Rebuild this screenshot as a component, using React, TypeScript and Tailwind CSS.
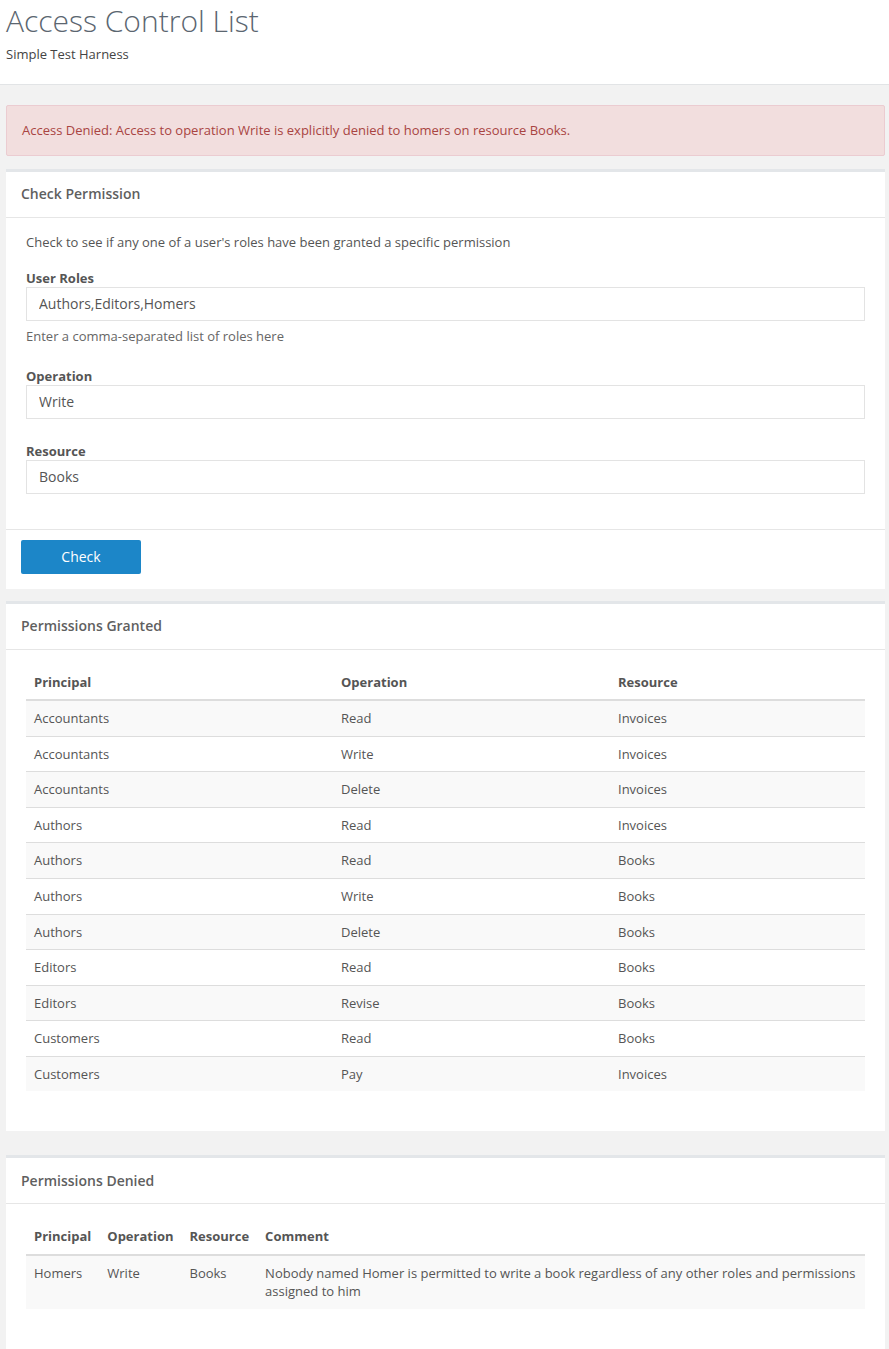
const granted = [
  ["Accountants", "Read", "Invoices"],
  ["Accountants", "Write", "Invoices"],
  ["Accountants", "Delete", "Invoices"],
  ["Authors", "Read", "Invoices"],
  ["Authors", "Read", "Books"],
  ["Authors", "Write", "Books"],
  ["Authors", "Delete", "Books"],
  ["Editors", "Read", "Books"],
  ["Editors", "Revise", "Books"],
  ["Customers", "Read", "Books"],
  ["Customers", "Pay", "Invoices"],
];

function Panel({ title, children }: { title: string; children: React.ReactNode }) {
  return (
    <div className="bg-white border-t-[3px] border-[#e3e6e9]">
      <div className="h-[46px] px-[15px] flex items-center border-b border-[#e6e6e6] text-[14px] font-semibold text-[#5f5f5f]">
        {title}
      </div>
      {children}
    </div>
  );
}

function Field({ label, value, help }: { label: string; value: string; help?: string }) {
  return (
    <div>
      <div className="font-bold text-[13px] text-[#555] leading-[18px]">{label}</div>
      <input
        readOnly
        value={value}
        className="block w-full h-[34px] border border-[#e3e3e3] px-[12px] text-[14px] text-[#555] outline-none"
      />
      {help && <div className="mt-[6px] text-[13px] text-[#666] leading-[18px]">{help}</div>}
    </div>
  );
}

export default function App() {
  return (
    <div
      className="min-h-[1349px] bg-[#f2f2f2] text-[13px] text-[#555] leading-[1.42857]"
      style={{ fontFamily: '"Open Sans", "Liberation Sans", sans-serif' }}
    >
      <div className="bg-white border-b border-[#e2e4e6] h-[85px] px-[6px]">
        <h1 className="text-[30px] font-light text-[#5b6670] leading-[40px] pt-[1px]">Access Control List</h1>
        <div className="text-[13px] text-[#444] mt-[4px]">Simple Test Harness</div>
      </div>

      <div className="pl-[6px] pr-[4px] pt-[20px]">
        <div className="bg-[#f2dede] border border-[#ebccd1] rounded-[2px] px-[15px] py-[15px] text-[#a94442]">
          Access Denied: Access to operation Write is explicitly denied to homers on resource Books.
        </div>

        <div className="mt-[13px]">
          <Panel title="Check Permission">
            <div className="px-[20px] pt-[15px] pb-[35px]">
              <p className="text-[#555] leading-[18px]">
                Check to see if any one of a user's roles have been granted a specific permission
              </p>
              <div className="mt-[18px]">
                <Field label="User Roles" value="Authors,Editors,Homers" help="Enter a comma-separated list of roles here" />
              </div>
              <div className="mt-[22px]">
                <Field label="Operation" value="Write" />
              </div>
              <div className="mt-[23px]">
                <Field label="Resource" value="Books" />
              </div>
            </div>
            <div className="border-t border-[#e6e6e6] px-[15px] pt-[10px] pb-[15px]">
              <button className="w-[120px] h-[34px] bg-[#1c86c8] text-white text-[14px] rounded-[2px]">Check</button>
            </div>
          </Panel>
        </div>

        <div className="mt-[12px]">
          <Panel title="Permissions Granted">
            <div className="px-[20px] pt-[15px] pb-[20px]">
              <table className="w-full border-collapse mb-[20px] table-fixed">
                <thead>
                  <tr className="border-b-2 border-[#dddddd]">
                    <th className="w-[307px] text-left font-bold px-[8px] py-[8px]">Principal</th>
                    <th className="w-[277px] text-left font-bold px-[8px] py-[8px]">Operation</th>
                    <th className="text-left font-bold px-[8px] py-[8px]">Resource</th>
                  </tr>
                </thead>
                <tbody>
                  {granted.map((r, i) => (
                    <tr key={i} className={(i % 2 === 0 ? "bg-[#f9f9f9]" : "bg-white") + " border-t border-[#dddddd]"}>
                      <td className="px-[8px] py-[8px]">{r[0]}</td>
                      <td className="px-[8px] py-[8px]">{r[1]}</td>
                      <td className="px-[8px] py-[8px]">{r[2]}</td>
                    </tr>
                  ))}
                </tbody>
              </table>
            </div>
          </Panel>
        </div>

        <div className="mt-[24px]">
          <Panel title="Permissions Denied">
            <div className="px-[20px] pt-[15px] pb-[20px]">
              <table className="w-full border-collapse mb-[20px]">
                <thead>
                  <tr className="border-b-2 border-[#dddddd]">
                    <th className="text-left font-bold px-[8px] py-[8px] whitespace-nowrap">Principal</th>
                    <th className="text-left font-bold px-[8px] py-[8px] whitespace-nowrap">Operation</th>
                    <th className="text-left font-bold px-[8px] py-[8px] whitespace-nowrap">Resource</th>
                    <th className="text-left font-bold px-[8px] py-[8px]">Comment</th>
                  </tr>
                </thead>
                <tbody>
                  <tr className="bg-[#f9f9f9]">
                    <td className="px-[8px] py-[8px] align-top">Homers</td>
                    <td className="px-[8px] py-[8px] align-top">Write</td>
                    <td className="px-[8px] py-[8px] align-top">Books</td>
                    <td className="px-[8px] py-[8px] align-top">
                      Nobody named Homer is permitted to write a book regardless of any other roles and permissions assigned to him
                    </td>
                  </tr>
                </tbody>
              </table>
            </div>
          </Panel>
        </div>
      </div>
    </div>
  );
}
